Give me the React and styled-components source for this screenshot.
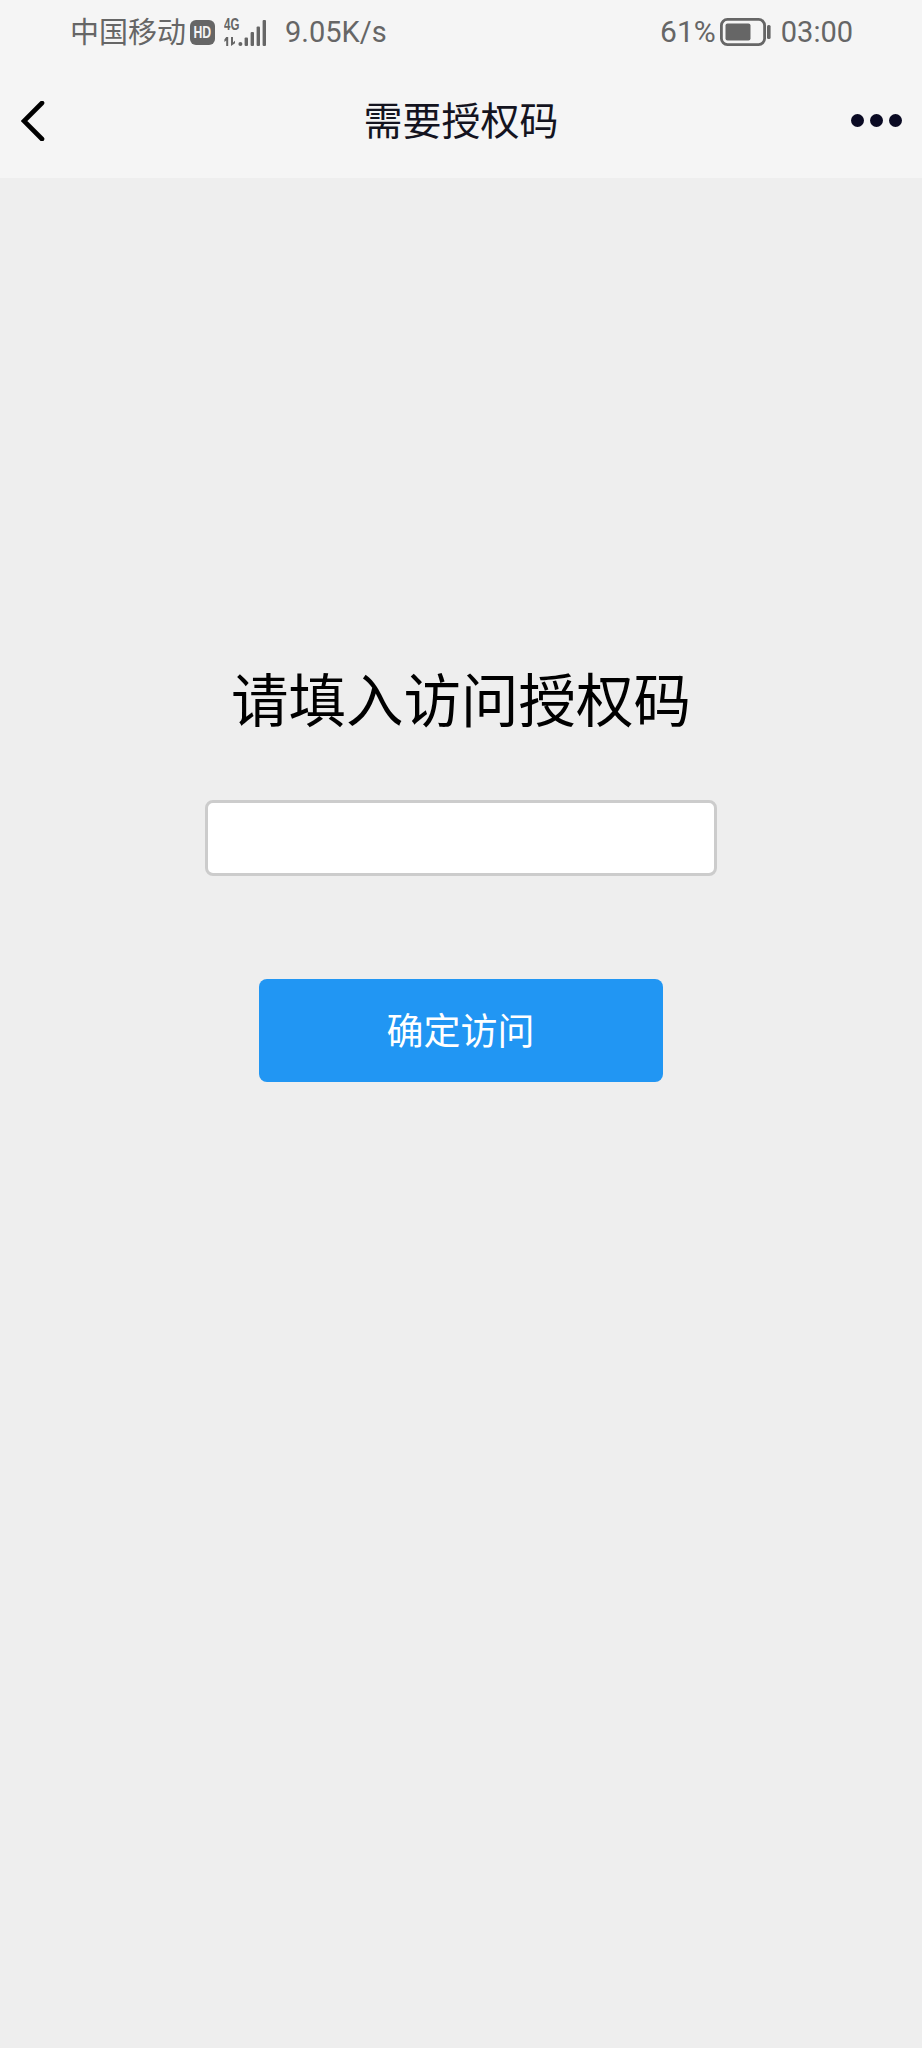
import React from 'react';
import styled, { createGlobalStyle } from 'styled-components';

const cjk = `Roboto, "Noto Sans CJK SC", sans-serif`;

const Global = createGlobalStyle`
  html, body {
    margin: 0;
    padding: 0;
    background: #eeeeee;
  }
  * {
    box-sizing: border-box;
  }
`;

const Page = styled.div`
  display: flex;
  flex-direction: column;
  width: 922px;
  height: 2048px;
  background: #eeeeee;
  font-family: ${cjk};
`;

const Top = styled.header`
  height: 178px;
  background: #f5f5f5;
  display: flex;
  flex-direction: column;
`;

const StatusBar = styled.div`
  height: 62px;
  padding: 2px 69px 0 70px;
  display: flex;
  align-items: center;
  justify-content: space-between;
  color: #666666;
  font-size: 29px;
`;

const StatusGroup = styled.div`
  display: flex;
  align-items: center;
`;

const Carrier = styled.span`
  font-size: 29px;
  line-height: 32px;
  margin-top: 2px;
`;

const HdBadge = styled.span`
  width: 25px;
  height: 25px;
  margin-left: 4px;
  border-radius: 6px;
  background: #666666;
  color: #f5f5f5;
  display: flex;
  align-items: center;
  justify-content: center;
  overflow: hidden;
`;

const HdText = styled.span`
  font: 700 17px/25px "Liberation Sans", sans-serif;
  transform: scaleX(0.72);
`;

const SignalBox = styled.span`
  width: 44px;
  height: 26px;
  margin-left: 9px;
  position: relative;
  display: block;
`;

const NetLabel = styled.span`
  position: absolute;
  left: 0;
  top: -2px;
  font: 700 16px/16px "Liberation Sans", sans-serif;
  transform: scaleX(0.72);
  transform-origin: left;
  color: #666666;
`;

const Speed = styled.span`
  margin-left: 17px;
  line-height: 32px;
`;

const Percent = styled.span`
  font-size: 30px;
  line-height: 32px;
`;

const Clock = styled.span`
  margin-left: 10px;
  line-height: 32px;
`;

const BatteryIcon = styled.svg`
  margin-left: 4px;
  display: block;
`;

const NavBar = styled.div`
  flex: 1;
  padding: 1px 21px 0 21px;
  display: flex;
  align-items: center;
  justify-content: space-between;
  position: relative;
`;

const NavTitle = styled.h1`
  position: absolute;
  left: 0;
  right: 0;
  margin: 2px 0 0;
  text-align: center;
  font-size: 39px;
  font-weight: 400;
  line-height: 50px;
  color: #14141f;
`;

const Dots = styled.div`
  display: flex;
  gap: 6px;
  margin-right: -1px;
`;

const Dot = styled.span`
  width: 13px;
  height: 13px;
  border-radius: 50%;
  background: #0a0a23;
`;

const Form = styled.main`
  flex: 1;
  padding-top: 488px;
  display: flex;
  flex-direction: column;
  align-items: center;
`;

const Heading = styled.h2`
  margin: 0;
  font-size: 57.5px;
  font-weight: 400;
  line-height: 74px;
  color: #000000;
  height: 74px;
`;

const CodeInput = styled.input`
  width: 512px;
  height: 76px;
  margin-top: 60px;
  border: 3px solid #cccccc;
  border-radius: 8px;
  background: #ffffff;
  outline: none;
`;

const Submit = styled.button`
  width: 404px;
  height: 103px;
  margin-top: 103px;
  margin-right: 1px;
  border: none;
  border-radius: 8px;
  background: #2196f3;
  color: #ffffff;
  font-family: ${cjk};
  font-size: 37px;
  padding: 0 0 3px;
`;

export default function App() {
  return (
    <Page>
      <Global />
      <Top>
        <StatusBar>
          <StatusGroup>
            <Carrier>中国移动</Carrier>
            <HdBadge>
              <HdText>HD</HdText>
            </HdBadge>
            <SignalBox>
              <NetLabel>4G</NetLabel>
              <svg width="44" height="26" viewBox="0 0 44 26" fill="#666666">
                <path d="M2.2 17 H4.2 V26 H2.2 V20.4 L0.4 22 V19.6 Z" />
                <path d="M7 17 H9 V22.6 L11 20.8 V23.2 L7 26 Z" />
                <circle cx="16.4" cy="24" r="2" />
                <rect x="20.6" y="17.5" width="3.4" height="8.5" rx="1" />
                <rect x="26.6" y="12" width="3.4" height="14" rx="1" />
                <rect x="32.6" y="6.5" width="3.4" height="19.5" rx="1" />
                <rect x="38.6" y="0" width="3.4" height="26" rx="1" />
              </svg>
            </SignalBox>
            <Speed>9.05K/s</Speed>
          </StatusGroup>
          <StatusGroup>
            <Percent>61%</Percent>
            <BatteryIcon width="51" height="28" viewBox="0 0 51 28">
              <rect x="1.4" y="1.4" width="43.2" height="25.2" rx="6" fill="none" stroke="#666666" strokeWidth="2.8" />
              <rect x="5.5" y="5.5" width="25" height="17" rx="2" fill="#666666" />
              <rect x="47" y="7" width="3.6" height="14" rx="1.5" fill="#666666" />
            </BatteryIcon>
            <Clock>03:00</Clock>
          </StatusGroup>
        </StatusBar>
        <NavBar>
          <svg width="24" height="40" viewBox="0 0 24 40" fill="none">
            <path d="M21 2 L3 20 L21 38" stroke="#000000" strokeWidth="4.6" strokeLinecap="round" strokeLinejoin="miter" />
          </svg>
          <NavTitle>需要授权码</NavTitle>
          <Dots>
            <Dot />
            <Dot />
            <Dot />
          </Dots>
        </NavBar>
      </Top>
      <Form>
        <Heading>请填入访问授权码</Heading>
        <CodeInput type="text" />
        <Submit type="button">确定访问</Submit>
      </Form>
    </Page>
  );
}
